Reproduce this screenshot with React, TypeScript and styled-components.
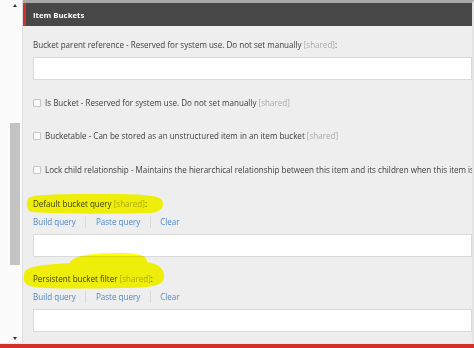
import React from 'react';
import styled, { createGlobalStyle } from 'styled-components';

const Global = createGlobalStyle`
  html, body { margin: 0; padding: 0; width: 474px; height: 348px; overflow: hidden; background: #fff; }
  body { font-family: "Open Sans", "Liberation Sans", sans-serif; }
  * { box-sizing: border-box; }
`;

const Page = styled.div`
  display: flex;
  flex-direction: column;
  width: 474px;
  height: 348px;
`;

const Main = styled.div`
  display: flex;
  flex: 1;
  min-height: 0;
`;

const Scrollbar = styled.div`
  width: 23px;
  flex: none;
  background: #fbfbfb;
  border-right: 1px solid #dedede;
  padding-left: 10px;
  display: flex;
  flex-direction: column;
`;

const Track = styled.div`
  width: 10px;
  flex: 1;
  display: flex;
  flex-direction: column;
  align-items: center;
`;

const Arrow = styled.div<{ $down?: boolean }>`
  width: 0;
  height: 0;
  border-left: 2.5px solid transparent;
  border-right: 2.5px solid transparent;
  ${(p) => (p.$down ? 'border-top: 3px solid #333;' : 'border-bottom: 3px solid #333;')}
  margin-top: ${(p) => (p.$down ? 'auto' : '4px')};
  margin-bottom: ${(p) => (p.$down ? '3px' : '0')};
`;

const Thumb = styled.div`
  width: 10px;
  height: 142px;
  margin-top: 116px;
  background: #c3c3c3;
`;

const Content = styled.div`
  flex: 1;
  min-width: 0;
  position: relative;
  background: #eeeeee;
  border-top: 3px solid #a9a9a9;
  border-right: 2px solid #e4e4e4;
  overflow: hidden;
`;

const Header = styled.div`
  height: 23px;
  background: #474747;
  border-left: 3px solid #d0312d;
  padding-left: 7px;
  display: flex;
  align-items: center;
  color: #fff;
  font-weight: 700;
  font-size: 7.8px;
`;

const Body = styled.div`
  padding: 13px 0 0 10px;
  display: flex;
  flex-direction: column;
  position: relative;
`;

const Label = styled.div<{ $mt?: number }>`
  height: 12px;
  line-height: 12px;
  font-size: 8.05px;
  color: #3d3d3d;
  white-space: nowrap;
  margin-top: ${(p) => p.$mt ?? 0}px;
`;

const Shared = styled.span`
  color: #ababab;
`;

const Field = styled.input<{ $mt?: number }>`
  display: block;
  width: 100%;
  height: 23px;
  margin: ${(p) => p.$mt ?? 6}px 0 0 0;
  background: #fff;
  border: 1px solid #dadada;
  outline: none;
  padding: 0 6px;
`;

const CheckRow = styled.div<{ $mt: number }>`
  display: flex;
  align-items: center;
  gap: 4px;
  height: 12px;
  line-height: 12px;
  font-size: 8.05px;
  color: #3d3d3d;
  white-space: nowrap;
  margin-top: ${(p) => p.$mt}px;
`;

const Box = styled.span`
  width: 8px;
  height: 8px;
  flex: none;
  border: 1px solid #c4c4c4;
  border-radius: 1px;
  background: #f9f9f9;
`;

const Links = styled.div`
  display: flex;
  align-items: center;
  height: 12px;
  margin-top: 6px;
  font-size: 8.05px;
  line-height: 12px;
`;

const Link = styled.a`
  color: #4d89c6;
  text-decoration: none;
  cursor: pointer;
`;

const Sep = styled.span`
  width: 1px;
  height: 12px;
  background: #d9d9d9;
  margin: 0 9.5px;
`;

const Marker = styled.svg`
  position: absolute;
  left: 0;
  top: 0;
  width: 451px;
  height: 341px;
  pointer-events: none;
  mix-blend-mode: multiply;
`;

const Bottom = styled.div`
  height: 5px;
  flex: none;
  border-top: 1px solid #f1e4e4;
  background: #d2322d;
`;

const QueryLinks = () => (
  <Links>
    <Link>Build query</Link>
    <Sep />
    <Link>Paste query</Link>
    <Sep />
    <Link>Clear</Link>
  </Links>
);

export default function App() {
  return (
    <>
      <Global />
      <Page>
        <Main>
          <Scrollbar>
            <Track>
              <Arrow />
              <Thumb />
              <Arrow $down />
            </Track>
          </Scrollbar>
          <Content>
            <Header>Item Buckets</Header>
            <Body>
              <Label>
                Bucket parent reference - Reserved for system use. Do not set manually <Shared>[shared]</Shared>:
              </Label>
              <Field readOnly />
              <CheckRow $mt={17}>
                <Box />
                <span>
                  Is Bucket - Reserved for system use. Do not set manually <Shared>[shared]</Shared>
                </span>
              </CheckRow>
              <CheckRow $mt={21}>
                <Box />
                <span>
                  Bucketable - Can be stored as an unstructured item in an item bucket <Shared>[shared]</Shared>
                </span>
              </CheckRow>
              <CheckRow $mt={22}>
                <Box />
                <span>
                  Lock child relationship - Maintains the hierarchical relationship between this item and its children when this item is
                </span>
              </CheckRow>
              <Label $mt={22}>
                Default bucket query <Shared>[shared]</Shared>:
              </Label>
              <QueryLinks />
              <Field readOnly />
              <Label $mt={16}>
                Persistent bucket filter <Shared>[shared]</Shared>:
              </Label>
              <QueryLinks />
              <Field readOnly />
            </Body>
            <Marker viewBox="0 0 451 341">
              <g transform="translate(-23,-3)" fill="#ffff0a">
                <path d="M 28 199 C 30 194, 60 194, 100 194 C 130 194, 158 194, 162 200 C 165 206, 162 212, 150 213 C 110 214, 60 214, 32 212 C 26 211, 26 203, 28 199 Z" />
                <path d="M 24 275 C 24 266, 40 265, 70 263 C 72 256, 90 253, 120 253 C 140 253, 148 256, 147 262 C 160 264, 165 270, 164 278 C 163 286, 150 288, 120 288 C 80 289, 40 289, 30 286 C 24 284, 23 280, 24 275 Z" />
              </g>
            </Marker>
          </Content>
        </Main>
        <Bottom />
      </Page>
    </>
  );
}
